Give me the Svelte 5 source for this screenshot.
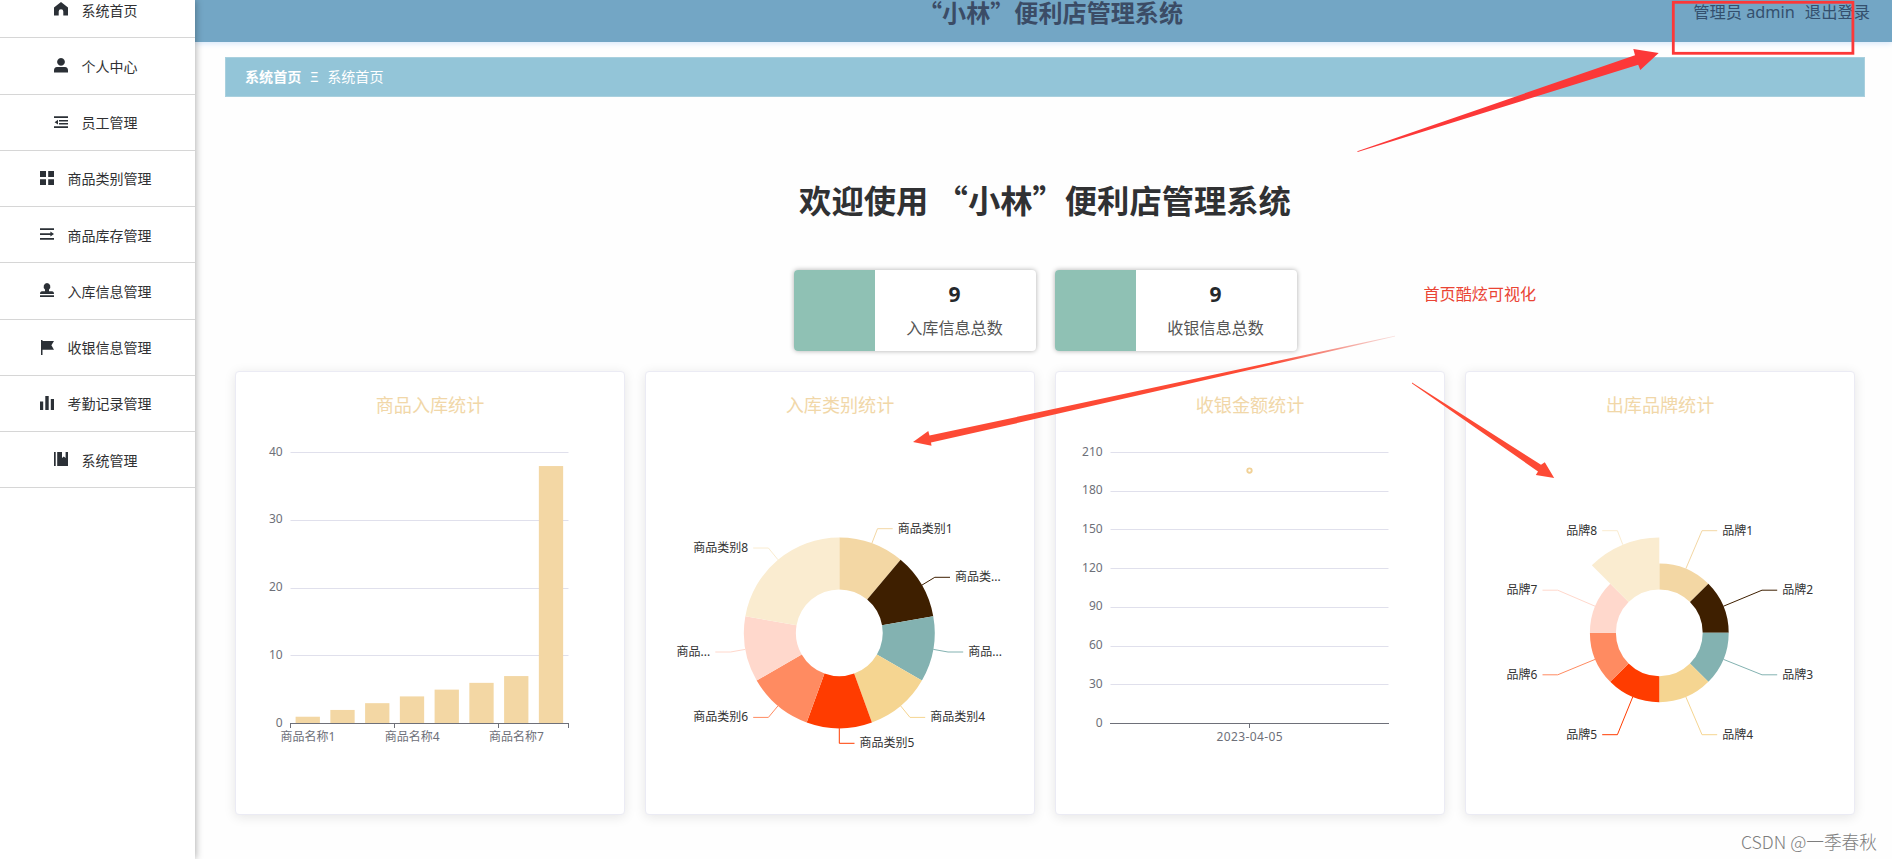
<script>
  const menu = [
    { label: '系统首页', icon: 'home' },
    { label: '个人中心', icon: 'user' },
    { label: '员工管理', icon: 'outdent' },
    { label: '商品类别管理', icon: 'grid' },
    { label: '商品库存管理', icon: 'indent' },
    { label: '入库信息管理', icon: 'stamp' },
    { label: '收银信息管理', icon: 'flag' },
    { label: '考勤记录管理', icon: 'bars' },
    { label: '系统管理', icon: 'book' }
  ]

  const icons = {
    home: 'M7 0 L14 5.4 V13.5 H9.3 V9.5 A2.3 2.3 0 0 0 4.7 9.5 V13.5 H0 V5.4 Z',
    user: 'M7 0 A3.9 3.9 0 1 1 6.99 0 Z M0 14.5 V12.5 Q0 9 3 9 H11 Q14 9 14 12.5 V14.5 Z',
    outdent: 'M0 1.3 H14 V3.1 H0 Z M5 4.9 H14 V6.5 H5 Z M5 8 H14 V9.6 H5 Z M0 11.3 H14 V13.1 H0 Z M4 4.8 V9.6 L.6 7.2 Z',
    grid: 'M0 0 H6 V6 H0 Z M8.2 0 H14 V6 H8.2 Z M0 8.2 H6 V14 H0 Z M8.2 8.2 H14 V14 H8.2 Z',
    indent: 'M0 1.2 H14 V3 H0 Z M0 6.2 H10.4 V8 H0 Z M0 11 H14 V12.8 H0 Z M10.4 4.6 V9.6 L14 7.1 Z',
    stamp: 'M7 0 A3.6 3.6 0 0 1 9 6.4 V8.2 H12 Q14 8.2 14 11 H0 Q0 8.2 2 8.2 H5 V6.4 A3.6 3.6 0 0 1 7 0 Z M0 12.2 H14 V13.9 H0 Z',
    flag: 'M1 0 H2.5 V1 H14 L11.4 5.3 L14 9.8 H2.5 V15 H1 Z',
    bars: 'M0 5.5 H3.2 V14 H0 Z M5.3 0 H8.7 V14 H5.3 Z M10.8 3 H14 V14 H10.8 Z',
    book: 'M0 0 H1.7 V14 H0 Z M3.2 0 H8 V6 L9.8 4.6 L11.6 6 V0 H14 V14 H3.2 Z'
  }

  const stats = [
    { label: '入库信息总数', value: 9 },
    { label: '收银信息总数', value: 9 }
  ]

  const palette = ['#f3d7a4', '#3e1f00', '#83b2b1', '#f5d591', '#ff3c00', '#ff8b61', '#ffd8cc', '#faecd0']

  // shared plot area of the two axis charts
  const plot = { left: 54.5, right: 332.5, top: 80.5, bottom: 351.5 }
  const bars = [1, 2, 3, 4, 5, 6, 7, 38]
  const step = (plot.right - plot.left) / bars.length

  const yPos = (value, max) => plot.bottom - (value / max) * (plot.bottom - plot.top)
  const gridY = (value, max) => Math.round(yPos(value, max) - 0.5) + 0.5

  const center = { x: 193.3, y: 260.8 }
  const hole = 43.4

  function point(radius, deg) {
    const rad = (deg * Math.PI) / 180
    return [center.x + radius * Math.sin(rad), center.y - radius * Math.cos(rad)]
  }

  function makeSlices(items) {
    const total = items.reduce((sum, item) => sum + item.value, 0)
    let start = 0

    return items.map((item, i) => {
      const end = start + (item.value / total) * 360
      const side = item.elbow[0] >= center.x ? 1 : -1
      const [ex, ey] = item.elbow
      const path = `M${point(hole, start)} L${point(item.r, start)} A${item.r} ${item.r} 0 0 1 ${point(item.r, end)} L${point(hole, end)} A${hole} ${hole} 0 0 0 ${point(hole, start)} Z`
      const line = `${point(item.r, (start + end) / 2)} ${ex},${ey} ${ex + 15.2 * side},${ey}`
      start = end

      return { ...item, path, line, side, color: palette[i], tx: ex + 20.3 * side, ty: ey + 3.8 }
    })
  }

  const categories = makeSlices([
    { label: '商品类别1', value: 1, r: 95.4, elbow: [231.5, 156.7] },
    { label: '商品类...', value: 1, r: 95.4, elbow: [288.8, 205.3] },
    { label: '商品...', value: 1, r: 95.4, elbow: [302, 280] },
    { label: '商品类别4', value: 1, r: 95.4, elbow: [264, 345.4] },
    { label: '商品类别5', value: 1, r: 95.4, elbow: [193.3, 371.3] },
    { label: '商品类别6', value: 1, r: 95.4, elbow: [122.4, 345.4] },
    { label: '商品...', value: 1, r: 95.4, elbow: [84.5, 280] },
    { label: '商品类别8', value: 2, r: 95.4, elbow: [122.4, 176] }
  ])

  const brands = makeSlices([
    { label: '品牌1', value: 1, r: 69.4, elbow: [236, 158.7] },
    { label: '品牌2', value: 1, r: 69.4, elbow: [296, 218.2] },
    { label: '品牌3', value: 1, r: 69.4, elbow: [296, 302.8] },
    { label: '品牌4', value: 1, r: 69.4, elbow: [236, 362.7] },
    { label: '品牌5', value: 1, r: 69.4, elbow: [151.4, 362.7] },
    { label: '品牌6', value: 1, r: 69.4, elbow: [91.7, 302.8] },
    { label: '品牌7', value: 1, r: 69.4, elbow: [91.7, 218.2] },
    { label: '品牌8', value: 1, r: 95.4, elbow: [151.4, 158.7] }
  ])
</script>

{#snippet gridLines(ticks, max)}
  {#each ticks as tick}
    {#if tick > 0}
      <line class="grid-line" x1={plot.left} x2={plot.right} y1={gridY(tick, max)} y2={gridY(tick, max)} />
    {/if}
    <text class="axis-label" x="46.7" y={yPos(tick, max) + 3} text-anchor="end">{tick}</text>
  {/each}
{/snippet}

{#snippet pie(slices)}
  {#each slices as slice}
    <path d={slice.path} fill={slice.color} />
    <polyline points={slice.line} fill="none" stroke={slice.color} />
    <text class="pie-label" x={slice.tx} y={slice.ty} text-anchor={slice.side > 0 ? 'start' : 'end'}>{slice.label}</text>
  {/each}
{/snippet}

<div class="page">
  <aside class="sidebar">
    <ul class="menu">
      {#each menu as item}
        <li>
          <svg class="icon" viewBox="0 0 14 15"><path d={icons[item.icon]} /></svg>
          <span>{item.label}</span>
        </li>
      {/each}
    </ul>
  </aside>

  <div class="main">
    <header class="header">
      <div class="header-title">“小林”便利店管理系统</div>
      <div class="user">
        <span>管理员 admin</span>
        <span>退出登录</span>
      </div>
    </header>

    <div class="content">
      <nav class="breadcrumb">
        <strong>系统首页</strong>
        <span class="separator">Ξ</span>
        <span>系统首页</span>
      </nav>

      <h1>欢迎使用 “小林”便利店管理系统</h1>

      <section class="stats">
        {#each stats as stat}
          <div class="stat">
            <div class="stat-color"></div>
            <div class="stat-body">
              <div class="stat-value">{stat.value}</div>
              <div class="stat-label">{stat.label}</div>
            </div>
          </div>
        {/each}
      </section>

      <section class="charts">
        <div class="card">
          <h3>商品入库统计</h3>
          <svg class="chart" viewBox="0 60 388 380">
            {@render gridLines([0, 10, 20, 30, 40], 40)}
            {#each bars as value, i}
              <rect x={plot.left + i * step + 5.1} y={yPos(value, 40)} width="24.3" height={plot.bottom - yPos(value, 40)} fill="#f3d7a4" />
            {/each}
            <path class="axis" d="M54 351.5 H333 M54.5 351.5 V356 M158.5 351.5 V356 M262.5 351.5 V356 M332.5 351.5 V356" />
            {#each [0, 3, 6] as i}
              <text class="axis-label" x={plot.left + (i + 0.5) * step} y="368.5" text-anchor="middle">商品名称{i + 1}</text>
            {/each}
          </svg>
        </div>

        <div class="card">
          <h3>入库类别统计</h3>
          <svg class="chart" viewBox="0 60 388 380">
            {@render pie(categories)}
          </svg>
        </div>

        <div class="card">
          <h3>收银金额统计</h3>
          <svg class="chart" viewBox="0 60 388 380">
            {@render gridLines([0, 30, 60, 90, 120, 150, 180, 210], 210)}
            <path class="axis" d="M54 351.5 H333 M193.5 351.5 V356" />
            <circle cx="193.5" cy={yPos(196, 210)} r="2.2" fill="#fff" stroke="#f1d196" stroke-width="1.9" />
            <text class="axis-label" x="193.5" y="368.5" text-anchor="middle" textLength="66">2023-04-05</text>
          </svg>
        </div>

        <div class="card">
          <h3>出库品牌统计</h3>
          <svg class="chart" viewBox="0 60 388 380">
            {@render pie(brands)}
          </svg>
        </div>
      </section>
    </div>
  </div>

  <!-- annotations drawn over the page -->
  <svg class="notes" viewBox="0 0 1892 859">
    <defs>
      <linearGradient id="fade" gradientUnits="userSpaceOnUse" x1="1395" y1="336" x2="1270" y2="362">
        <stop offset="0" stop-color="#e04030" stop-opacity="0.15" />
        <stop offset="1" stop-color="#fd4a35" />
      </linearGradient>
    </defs>
    <rect x="1673.3" y="2.3" width="179.6" height="51" fill="none" stroke="#fc3838" stroke-width="2.8" />
    <path fill="#fc3838" d="M1357.3 151.2 L1635 55.2 L1633.3 49 L1658.7 53 L1640.3 70 L1638.2 64.8 L1357.6 152 Z" />
    <path fill="url(#fade)" d="M1395 335.8 L929.5 435.6 L928.3 431 L913 442 L931.5 445.8 L931 442.4 L1000 427 L1395 336.6 Z" />
    <path fill="#fd4a35" d="M1412 382.6 L1541 464.8 L1544.8 462.2 L1554.2 478 L1535.8 475 L1538 471.4 L1412 383.6 Z" />
    <text class="note" x="1423.5" y="299.5">首页酷炫可视化</text>
  </svg>

  <div class="watermark">CSDN @一季春秋</div>
</div>

<style>
  :global(body) {
    background: #fefefe;
    font-family: 'Noto Sans CJK SC', 'Noto Sans', sans-serif;
    color: #333;
  }

  .page {
    position: relative;
    display: flex;
    width: 1892px;
    height: 859px;
    overflow: hidden;
  }

  .sidebar {
    flex: none;
    width: 195px;
    height: 859px;
    background: #fff;
    box-shadow: 1px 0 7px rgba(0, 0, 0, 0.3);
    z-index: 1;
  }

  .menu {
    margin: -18px 0 0;
    padding: 0;
    list-style: none;
  }

  .menu li {
    display: flex;
    align-items: center;
    justify-content: center;
    gap: 13.5px;
    height: 56.25px;
    padding-right: 3.5px;
    box-sizing: border-box;
    border-bottom: 1px solid #d6d6d6;
    font-size: 14px;
    line-height: 20px;
    color: #303133;
  }

  .icon {
    width: 14px;
    height: 15px;
    fill: #2b3036;
  }

  .main {
    flex: 1;
    display: flex;
    flex-direction: column;
  }

  .header {
    display: grid;
    grid-template-columns: 1fr auto 1fr;
    align-items: center;
    height: 42px;
    padding: 0 22px 18px 36px;
    box-sizing: border-box;
    background: #73a6c5;
    box-shadow: 0 1px 6px #cfe3fa;
    color: #34506e;
  }

  .header-title {
    grid-column: 2;
    font-size: 24.1px;
    line-height: 22px;
    font-weight: 700;
    color: #3b4c66;
  }

  .user {
    display: flex;
    justify-content: flex-end;
    gap: 10px;
    font-family: 'Noto Sans', 'Noto Sans CJK SC', sans-serif;
    font-size: 16.3px;
    line-height: 22px;
  }

  .content {
    padding: 15px 27px 0 30px;
  }

  .breadcrumb {
    display: flex;
    align-items: center;
    height: 40px;
    padding: 0 19px 2px;
    box-sizing: border-box;
    border: 1px solid #a9d0de;
    background: #93c5d8;
    color: #fff;
    font-size: 14.1px;
  }

  .separator {
    margin: 0 8.5px;
    font-family: 'Noto Sans', sans-serif;
    font-size: 14px;
  }

  h1 {
    margin: 78px 0 0;
    font-size: 32.3px;
    line-height: 48px;
    font-weight: 700;
    text-align: center;
    color: #303133;
  }

  .stats {
    display: flex;
    justify-content: center;
    gap: 19px;
    margin-top: 47px;
  }

  .stat {
    display: flex;
    width: 242px;
    height: 81px;
    overflow: hidden;
    border-radius: 4px;
    background: #fff;
    box-shadow: 0 0 5px rgba(0, 0, 0, 0.32);
  }

  .stat-color {
    width: 81px;
    background: #8fc1b4;
  }

  .stat-body {
    flex: 1;
    padding: 11px 1px 0 0;
    text-align: center;
  }

  .stat-value {
    font-family: 'Noto Sans', sans-serif;
    font-size: 21px;
    line-height: 26px;
    font-weight: 700;
    color: #25282c;
  }

  .stat-label {
    margin-top: 8px;
    font-size: 16.1px;
    line-height: 24px;
    color: #555;
  }

  .charts {
    display: grid;
    grid-template-columns: repeat(4, 390px);
    gap: 20px;
    margin: 20px 0 0 10px;
  }

  .card {
    height: 444px;
    box-sizing: border-box;
    border: 1px solid #ebebf4;
    border-radius: 4px;
    background: #fff;
    box-shadow: 0 2px 12px rgba(0, 0, 0, 0.1);
  }

  h3 {
    height: 60px;
    margin: 0;
    padding-top: 20px;
    box-sizing: border-box;
    font-size: 18.1px;
    line-height: 24px;
    font-weight: 400;
    text-align: center;
    color: #f1d7a8;
  }

  .chart {
    display: block;
    width: 388px;
    height: 380px;
  }

  .grid-line {
    stroke: #e0e0ec;
  }

  .axis {
    fill: none;
    stroke: #6e7079;
  }

  .axis-label {
    font-family: 'Noto Sans', 'Noto Sans CJK SC', sans-serif;
    font-size: 12px;
    fill: #6e7079;
  }

  .pie-label {
    font-family: 'Noto Sans', 'Noto Sans CJK SC', sans-serif;
    font-size: 12px;
    fill: #333;
  }

  .notes {
    position: absolute;
    inset: 0;
    z-index: 2;
    width: 1892px;
    height: 859px;
    pointer-events: none;
  }

  .note {
    font-size: 16.1px;
    fill: #ea4434;
  }

  .watermark {
    position: absolute;
    right: 15px;
    bottom: 6px;
    z-index: 3;
    font-size: 17.7px;
    line-height: 24px;
    font-weight: 300;
    color: #7d7d7d;
  }
</style>
